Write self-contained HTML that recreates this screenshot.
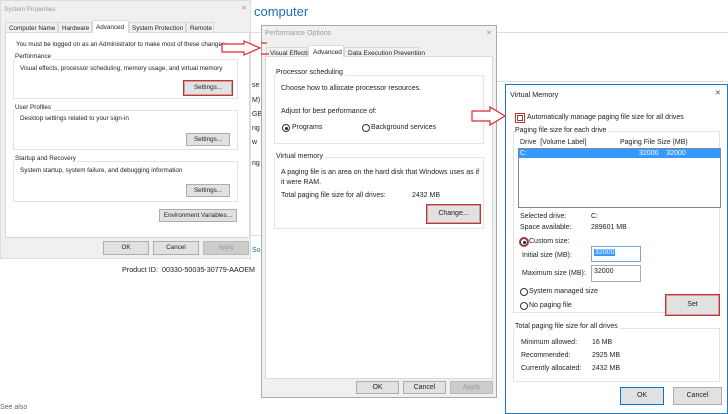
<!DOCTYPE html><html><head><style>
*{margin:0;padding:0;box-sizing:border-box}
body{width:728px;height:414px;background:#fff;position:relative;overflow:hidden;font-family:"Liberation Sans",sans-serif;font-size:7px;color:#222}
.a{position:absolute;white-space:nowrap}
.win{position:absolute;background:#f0f0f0;border:1px solid #aaa}
.pan{position:absolute;background:#fff;border:1px solid #d9d9d9}
.grp{position:absolute;border:1px solid #e3e3e3}
.btn{position:absolute;background:#e1e1e1;border:1px solid #adadad;text-align:center;font-size:7px;color:#222}
.red{outline:1px solid #e0262b}
.rad{position:absolute;width:8px;height:8px;border:1px solid #333;border-radius:50%;background:#fff}
.sp .a,.sp .btn{font-size:6.3px}
</style></head><body>
<div class="a" style="left:254px;top:4px;font-size:13px;color:#1f6fb5">computer</div>
<div class="a" style="left:250px;top:32px;width:478px;border-top:1px solid #ddd"></div>
<div class="a" style="left:497px;top:81px;width:231px;border-top:1px solid #ddd"></div>
<div class="a" style="left:250px;top:235px;width:20px;border-top:1px solid #ddd"></div>
<div class="a" style="left:252px;top:82px;font-size:7px">se</div>
<div class="a" style="left:252px;top:97px">M)<br><br>GB<br><br>ng<br><br>w<br><br><br>ng</div>
<div class="a" style="left:252px;top:247px;color:#1f6fb5">So</div>
<div class="a" style="left:122px;top:265px;font-size:7.2px">Product ID:&nbsp; 00330-50035-30779-AAOEM</div>
<div class="a" style="left:0;top:404px;color:#666">See also</div>

<!-- System Properties -->
<div class="sp">
<div class="win" style="left:0;top:0;width:251px;height:259px;background:#f0f0f0;border-color:#ddd"></div>
<div class="a" style="left:4px;top:6px;color:#999">System Properties</div>
<div class="a" style="left:241px;top:5px;color:#999">✕</div>
<div class="pan" style="left:5px;top:32px;width:245px;height:206px"></div>
<div class="a" style="left:5px;top:22px;height:10px;width:53px;border:1px solid #d9d9d9;border-bottom:none;padding:2px 3px">Computer Name</div>
<div class="a" style="left:58px;top:22px;height:10px;width:34px;border:1px solid #d9d9d9;border-bottom:none;padding:2px 3px">Hardware</div>
<div class="a" style="left:92px;top:20px;height:13px;width:37px;background:#fff;border:1px solid #d9d9d9;border-bottom:none;padding:3px 3px">Advanced</div>
<div class="a" style="left:129px;top:22px;height:10px;width:57px;border:1px solid #d9d9d9;border-bottom:none;padding:2px 2px">System Protection</div>
<div class="a" style="left:186px;top:22px;height:10px;width:28px;border:1px solid #d9d9d9;border-bottom:none;padding:2px 3px">Remote</div>
<div class="a" style="left:16px;top:41px">You must be logged on as an Administrator to make most of these changes.</div>
<div class="grp" style="left:13px;top:59px;width:225px;height:40px"></div>
<div class="a" style="left:15px;top:53px;background:#fff;padding-right:2px">Performance</div>
<div class="a" style="left:20px;top:65px">Visual effects, processor scheduling, memory usage, and virtual memory</div>
<div class="btn red" style="left:184px;top:81px;width:48px;height:14px;line-height:12px">Settings...</div>
<div class="grp" style="left:13px;top:110px;width:225px;height:40px"></div>
<div class="a" style="left:15px;top:104px;background:#fff;padding-right:2px">User Profiles</div>
<div class="a" style="left:20px;top:115px">Desktop settings related to your sign-in</div>
<div class="btn" style="left:186px;top:133px;width:44px;height:13px;line-height:11px">Settings...</div>
<div class="grp" style="left:13px;top:161px;width:225px;height:41px"></div>
<div class="a" style="left:15px;top:155px;background:#fff;padding-right:2px">Startup and Recovery</div>
<div class="a" style="left:20px;top:167px">System startup, system failure, and debugging information</div>
<div class="btn" style="left:186px;top:184px;width:44px;height:13px;line-height:11px">Settings...</div>
<div class="btn" style="left:159px;top:209px;width:78px;height:13px;line-height:11px">Environment Variables...</div>
<div class="btn" style="left:103px;top:241px;width:46px;height:14px;line-height:12px">OK</div>
<div class="btn" style="left:153px;top:241px;width:46px;height:14px;line-height:12px">Cancel</div>
<div class="btn" style="left:203px;top:241px;width:46px;height:14px;line-height:12px;color:#999;background:#ccc;border-color:#bbb">Apply</div>
</div>

<!-- arrow 1 -->
<svg class="a" style="left:220px;top:40px" width="45" height="18"><path d="M2 4H24V1L40 8L24 15V12H2Z" fill="#fff" stroke="#e0262b" stroke-width="1.2"/></svg>

<!-- Performance Options -->
<div class="win" style="left:261px;top:25px;width:236px;height:373px;border-color:#aaa"></div>
<div class="a" style="left:265px;top:30px;color:#999">Performance Options</div>
<div class="a" style="left:486px;top:29px;color:#999">✕</div>
<div class="pan" style="left:265px;top:56px;width:228px;height:323px"></div>
<div class="a" style="left:266px;top:47px;height:10px;width:41px;border:1px solid #d9d9d9;border-bottom:none;padding:2px 3px;font-size:6.5px">Visual Effects</div>
<div class="a" style="left:308px;top:45px;height:12px;width:36px;background:#fff;border:1px solid #d9d9d9;border-bottom:none;padding:3px 4px;font-size:6.5px">Advanced</div>
<div class="a" style="left:344px;top:47px;height:10px;width:75px;border:1px solid #d9d9d9;border-bottom:none;padding:2px 3px;font-size:6.5px">Data Execution Prevention</div>
<svg class="a" style="left:261px;top:40px" width="10" height="18"><path d="M0 3H6M0 14H8" stroke="#e0262b" stroke-width="1.2"/></svg>
<div class="grp" style="left:274px;top:75px;width:210px;height:69px"></div>
<div class="a" style="left:276px;top:69px;background:#fff;padding-right:2px">Processor scheduling</div>
<div class="a" style="left:281px;top:85px">Choose how to allocate processor resources.</div>
<div class="a" style="left:281px;top:108px">Adjust for best performance of:</div>
<div class="rad" style="left:282px;top:124px"></div><div class="a" style="left:284.5px;top:126.5px;width:3px;height:3px;background:#222;border-radius:50%"></div>
<div class="a" style="left:292px;top:124px">Programs</div>
<div class="rad" style="left:362px;top:124px"></div>
<div class="a" style="left:371px;top:124px">Background services</div>
<div class="grp" style="left:274px;top:157px;width:210px;height:72px"></div>
<div class="a" style="left:276px;top:153px;background:#fff;padding-right:2px">Virtual memory</div>
<div class="a" style="left:281px;top:168px;line-height:10px">A paging file is an area on the hard disk that Windows uses as if<br>it were RAM.</div>
<div class="a" style="left:281px;top:192px">Total paging file size for all drives:</div>
<div class="a" style="left:412px;top:192px">2432 MB</div>
<div class="btn red" style="left:427px;top:205px;width:53px;height:18px;line-height:16px">Change...</div>
<div class="btn" style="left:356px;top:381px;width:43px;height:13px;line-height:11px">OK</div>
<div class="btn" style="left:403px;top:381px;width:43px;height:13px;line-height:11px">Cancel</div>
<div class="btn" style="left:450px;top:381px;width:43px;height:13px;line-height:11px;color:#999;background:#ccc;border-color:#bbb">Apply</div>

<!-- arrow 2 -->
<svg class="a" style="left:470px;top:106px" width="40" height="20"><path d="M2 5H20V1L35 10L20 19V15H2Z" fill="#fff" stroke="#e0262b" stroke-width="1.2"/></svg>

<!-- Virtual Memory -->
<div class="a" style="left:505px;top:84px;width:223px;height:330px;background:#fff;border:1px solid #1979ca"></div>
<div class="a" style="left:510px;top:90px;font-size:7.2px">Virtual Memory</div>
<div class="a" style="left:715px;top:89px;color:#444">✕</div>
<div class="a" style="left:515px;top:113px;width:10px;height:10px;border:1px solid #e0262b;background:#fff"><div style="margin:1px;width:6px;height:6px;border:1px solid #555"></div></div>
<div class="a" style="left:527px;top:114px">Automatically manage paging file size for all drives</div>
<div class="grp" style="left:513px;top:131px;width:207px;height:182px"></div>
<div class="a" style="left:515px;top:127px;background:#fff;padding-right:2px">Paging file size for each drive</div>
<div class="a" style="left:520px;top:139px">Drive&nbsp; [Volume Label]</div>
<div class="a" style="left:620px;top:139px">Paging File Size (MB)</div>
<div class="a" style="left:518px;top:148px;width:203px;height:60px;border:1px solid #828790;background:#fff"></div>
<div class="a" style="left:519px;top:149px;width:201px;height:9px;background:#3399ff;color:#fff;padding-left:1px;line-height:9px">C:<span style="position:absolute;left:120px">32000&nbsp;&nbsp;&nbsp; 32000</span></div>
<div class="a" style="left:520px;top:213px">Selected drive:</div><div class="a" style="left:591px;top:213px">C:</div>
<div class="a" style="left:520px;top:224px">Space available:</div><div class="a" style="left:591px;top:224px">289601 MB</div>
<div class="rad" style="left:520px;top:238px;outline:1px solid #e0262b;outline-offset:0"></div><div class="a" style="left:522.5px;top:240.5px;width:3px;height:3px;background:#222;border-radius:50%"></div>
<div class="a" style="left:529px;top:238px">Custom size:</div>
<div class="a" style="left:522px;top:252px">Initial size (MB):</div>
<div class="a" style="left:591px;top:246px;width:50px;height:16px;border:1px solid #7aa7d6;background:#fff"><span style="display:inline-block;margin:2px;background:#3399ff;color:#fff;padding:0 1px">32000</span></div>
<div class="a" style="left:522px;top:270px">Maximum size (MB):</div>
<div class="a" style="left:591px;top:265px;width:50px;height:17px;border:1px solid #aaa;background:#fff;padding:2px 2px">32000</div>
<div class="rad" style="left:520px;top:288px"></div><div class="a" style="left:529px;top:288px">System managed size</div>
<div class="rad" style="left:520px;top:302px"></div><div class="a" style="left:529px;top:302px">No paging file</div>
<div class="btn red" style="left:666px;top:295px;width:53px;height:20px;line-height:18px">Set</div>
<div class="grp" style="left:513px;top:328px;width:207px;height:54px"></div>
<div class="a" style="left:515px;top:323px;background:#fff;padding-right:2px">Total paging file size for all drives</div>
<div class="a" style="left:521px;top:339px">Minimum allowed:</div><div class="a" style="left:592px;top:339px">16 MB</div>
<div class="a" style="left:521px;top:352px">Recommended:</div><div class="a" style="left:592px;top:352px">2925 MB</div>
<div class="a" style="left:521px;top:365px">Currently allocated:</div><div class="a" style="left:592px;top:365px">2432 MB</div>
<div class="btn" style="left:620px;top:387px;width:44px;height:18px;line-height:16px;border-color:#0078d7">OK</div>
<div class="btn" style="left:673px;top:387px;width:49px;height:18px;line-height:16px">Cancel</div>
</body></html>
